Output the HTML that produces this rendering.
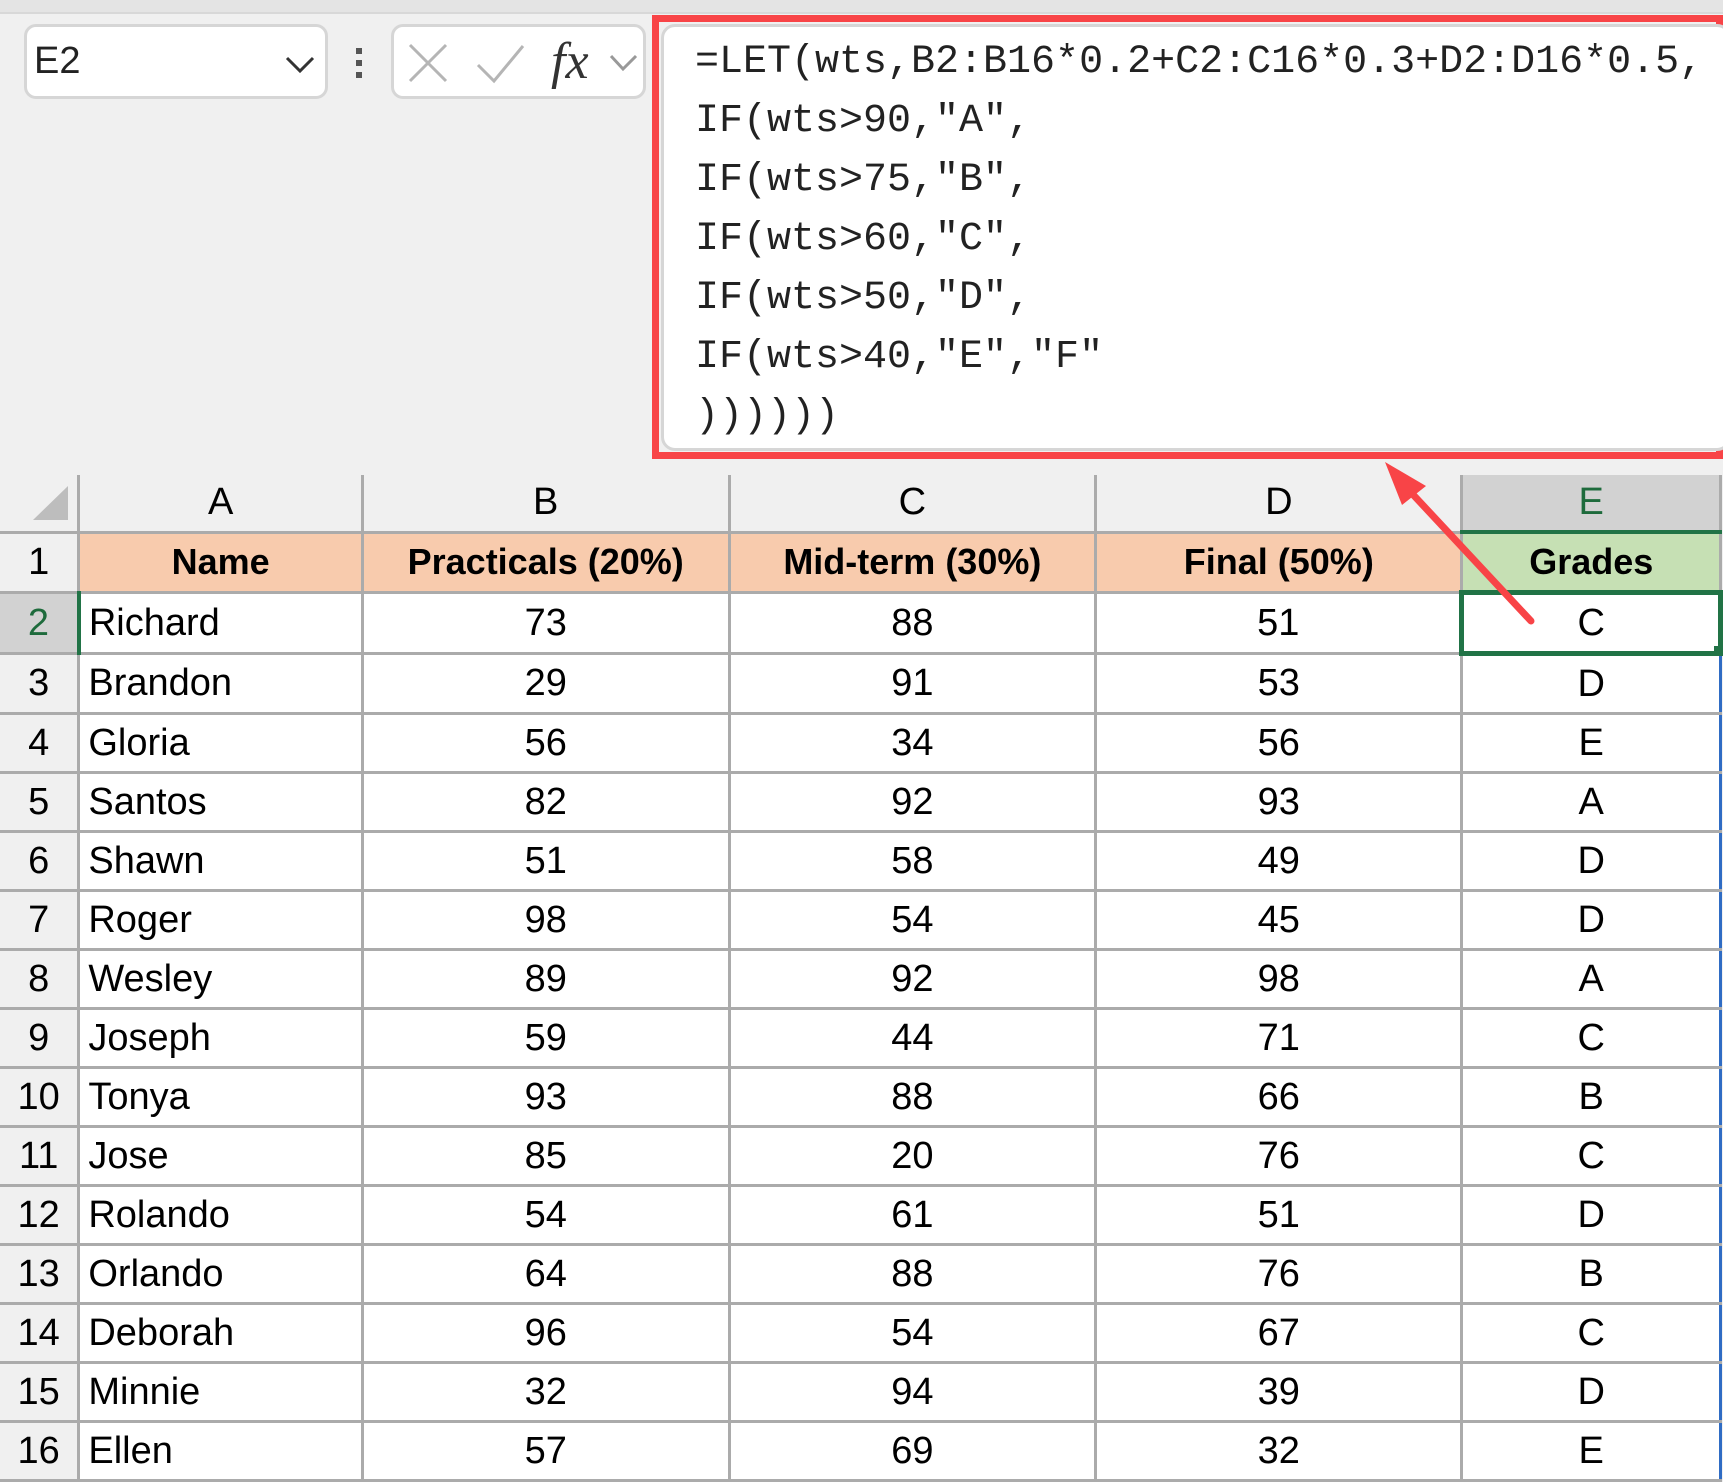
<!DOCTYPE html>
<html><head><meta charset="utf-8"><style>
body{margin:0;width:1723px;height:1475px;background:#f0f0f0;position:relative;overflow:hidden;font-family:"Liberation Sans",sans-serif}
.topbar{position:absolute;left:0;top:0;width:1723px;height:12px;background:#e4e4e4;border-bottom:2px solid #d8d8d8}
.box{position:absolute;background:#fff;border:3px solid #d6d6d6;border-radius:12px;box-sizing:border-box}
table{position:absolute;left:0;top:475px;border-collapse:collapse;table-layout:fixed;font-size:38px;color:#000}
td{border:3px solid #ababab;height:56px;padding:0;text-align:center;background:#fff;white-space:nowrap;overflow:hidden}
tr.ch td{background:#f0f0f0;height:55px;border-top:none}
td.rh{background:#f0f0f0;text-align:center;border-left:none}
td.n{text-align:left;padding-left:8px}
tr.h td{background:#f8cbad;font-weight:bold;font-size:36px}
tr.h td.rh{background:#f0f0f0;font-weight:normal;font-size:38px}
tr.h td.g{background:#c6e0b4}
.mono{position:absolute;left:695px;font-family:"Liberation Mono",monospace;font-size:40px;color:#222;line-height:59px;white-space:pre;top:33px}
</style></head><body>
<div class="topbar"></div>
<div class="box" style="left:24px;top:24px;width:304px;height:75px"></div>
<div style="position:absolute;left:34px;top:40px;font-size:38px;color:#222">E2</div>
<svg style="position:absolute;left:285px;top:55px" width="30" height="20"><path d="M2 3 L15 16 L28 3" fill="none" stroke="#333" stroke-width="3"/></svg>
<div style="position:absolute;left:356px;top:48px;width:6px;height:6px;background:#555"></div>
<div style="position:absolute;left:356px;top:60px;width:6px;height:6px;background:#555"></div>
<div style="position:absolute;left:356px;top:72px;width:6px;height:6px;background:#555"></div>
<div class="box" style="left:391px;top:24px;width:255px;height:75px"></div>
<svg style="position:absolute;left:405px;top:36px" width="240" height="60">
<path d="M5 9 L41 45 M41 9 L5 45" stroke="#b5b5b5" stroke-width="3" fill="none"/>
<path d="M73 29 L89 45 L118 10" stroke="#b5b5b5" stroke-width="3" fill="none"/>
<text x="146" y="42" font-family="Liberation Serif" font-style="italic" font-size="52" fill="#333">fx</text>
<path d="M206 20 L218 33 L231 20" stroke="#999" stroke-width="3" fill="none"/>
</svg>
<div style="position:absolute;left:652px;top:15px;width:1071px;height:444px;border:7px solid #f84447;box-sizing:border-box;background:#f0f0f0"></div>
<div class="box" style="left:661px;top:24px;width:1070px;height:427px;border-radius:14px"></div>
<div class="mono">=LET(wts,B2:B16*0.2+C2:C16*0.3+D2:D16*0.5,
IF(wts&gt;90,"A",
IF(wts&gt;75,"B",
IF(wts&gt;60,"C",
IF(wts&gt;50,"D",
IF(wts&gt;40,"E","F"
))))))</div>
<table>
<colgroup><col style="width:79px"><col style="width:284px"><col style="width:367px"><col style="width:367px"><col style="width:367px"><col style="width:259px"></colgroup>
<tr class="ch"><td class="rh" style="border-top:none"></td><td>A</td><td>B</td><td>C</td><td>D</td><td style="background:#d2d2d2;color:#1e6b3c;border-bottom:4px solid #217346">E</td></tr>
<tr class="h"><td class="rh">1</td><td>Name</td><td>Practicals (20%)</td><td>Mid-term (30%)</td><td>Final (50%)</td><td class="g">Grades</td></tr>
<tr><td class="rh" style="background:#d2d2d2;color:#1e6b3c;border-right:4px solid #217346">2</td><td class="n">Richard</td><td>73</td><td>88</td><td>51</td><td style="border:5px solid #217346">C</td></tr>
<tr><td class="rh">3</td><td class="n">Brandon</td><td>29</td><td>91</td><td>53</td><td style="border-left:3px solid #2f6cc4;border-right:3px solid #2f6cc4">D</td></tr>
<tr><td class="rh">4</td><td class="n">Gloria</td><td>56</td><td>34</td><td>56</td><td style="border-left:3px solid #2f6cc4;border-right:3px solid #2f6cc4">E</td></tr>
<tr><td class="rh">5</td><td class="n">Santos</td><td>82</td><td>92</td><td>93</td><td style="border-left:3px solid #2f6cc4;border-right:3px solid #2f6cc4">A</td></tr>
<tr><td class="rh">6</td><td class="n">Shawn</td><td>51</td><td>58</td><td>49</td><td style="border-left:3px solid #2f6cc4;border-right:3px solid #2f6cc4">D</td></tr>
<tr><td class="rh">7</td><td class="n">Roger</td><td>98</td><td>54</td><td>45</td><td style="border-left:3px solid #2f6cc4;border-right:3px solid #2f6cc4">D</td></tr>
<tr><td class="rh">8</td><td class="n">Wesley</td><td>89</td><td>92</td><td>98</td><td style="border-left:3px solid #2f6cc4;border-right:3px solid #2f6cc4">A</td></tr>
<tr><td class="rh">9</td><td class="n">Joseph</td><td>59</td><td>44</td><td>71</td><td style="border-left:3px solid #2f6cc4;border-right:3px solid #2f6cc4">C</td></tr>
<tr><td class="rh">10</td><td class="n">Tonya</td><td>93</td><td>88</td><td>66</td><td style="border-left:3px solid #2f6cc4;border-right:3px solid #2f6cc4">B</td></tr>
<tr><td class="rh">11</td><td class="n">Jose</td><td>85</td><td>20</td><td>76</td><td style="border-left:3px solid #2f6cc4;border-right:3px solid #2f6cc4">C</td></tr>
<tr><td class="rh">12</td><td class="n">Rolando</td><td>54</td><td>61</td><td>51</td><td style="border-left:3px solid #2f6cc4;border-right:3px solid #2f6cc4">D</td></tr>
<tr><td class="rh">13</td><td class="n">Orlando</td><td>64</td><td>88</td><td>76</td><td style="border-left:3px solid #2f6cc4;border-right:3px solid #2f6cc4">B</td></tr>
<tr><td class="rh">14</td><td class="n">Deborah</td><td>96</td><td>54</td><td>67</td><td style="border-left:3px solid #2f6cc4;border-right:3px solid #2f6cc4">C</td></tr>
<tr><td class="rh">15</td><td class="n">Minnie</td><td>32</td><td>94</td><td>39</td><td style="border-left:3px solid #2f6cc4;border-right:3px solid #2f6cc4">D</td></tr>
<tr><td class="rh">16</td><td class="n">Ellen</td><td>57</td><td>69</td><td>32</td><td style="border-left:3px solid #2f6cc4;border-right:3px solid #2f6cc4">E</td></tr>
</table>
<svg style="position:absolute;left:0;top:0" width="1723" height="1475">
<polygon points="33,520 68,520 68,486" fill="#bdbdbd"/>
<rect x="1714" y="646" width="9" height="9" fill="#217346"/>
<line x1="1531" y1="621" x2="1405" y2="486" stroke="#f84447" stroke-width="7" stroke-linecap="round"/>
<polygon points="1385,462 1426,486 1402,505" fill="#f84447"/>
</svg>
</body></html>
